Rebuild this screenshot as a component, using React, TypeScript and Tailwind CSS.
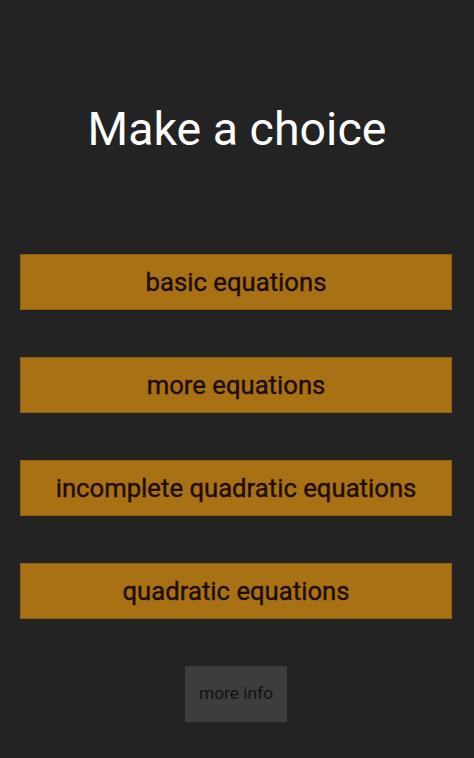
export default function App() {
  const choices = [
    "basic equations",
    "more equations",
    "incomplete quadratic equations",
    "quadratic equations",
  ];
  return (
    <div
      className="w-[474px] h-[758px] bg-[#232323] flex flex-col items-center"
      style={{ fontFamily: "Roboto, 'Noto Sans', sans-serif" }}
    >
      <h1 className="mt-[100px] h-[58px] text-[46.5px] leading-[58px] text-white font-normal">
        Make a choice
      </h1>
      <div className="mt-[96px] w-[432px] -translate-x-[1px] flex flex-col gap-[47px]">
        {choices.map((c) => (
          <button
            key={c}
            className="h-[56px] w-full bg-[#a87114] border border-[#8c5d12] text-[#1e0d04] text-[25.7px] font-normal leading-none pt-[2px] [-webkit-text-stroke:0.4px_#1e0d04]"
          >
            {c}
          </button>
        ))}
      </div>
      <button className="mt-[47px] w-[102px] h-[56px] bg-[#3d3d3d] text-[#121212] text-[17.4px] font-normal leading-none -translate-x-[1px]">
        more info
      </button>
    </div>
  );
}
